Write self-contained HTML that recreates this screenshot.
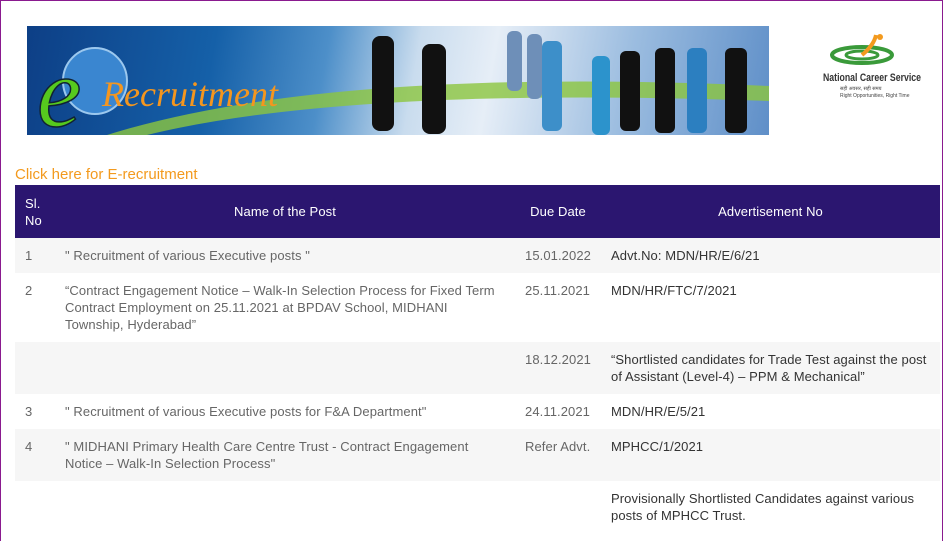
<!DOCTYPE html>
<html><head><meta charset="utf-8"><style>
html,body{margin:0;padding:0;}
body{width:943px;height:535px;overflow:hidden;background:#fff;font-family:"Liberation Sans",sans-serif;position:relative;}
.frame{position:absolute;left:0;top:0;width:941px;height:540px;border:1px solid #8a1a8f;border-bottom:none;}
.banner{position:absolute;left:27px;top:26px;width:742px;height:109px;overflow:hidden;
background:linear-gradient(100deg,#0d3f86 0%,#1560a8 25%,#4d8fc9 40%,#c9dcee 52%,#e6eef7 62%,#9cbde0 80%,#5f8fc8 100%);}
.link{position:absolute;left:15px;top:166px;color:#f39a1e;font-size:15px;}
table{position:absolute;left:15px;top:185px;width:925px;border-collapse:collapse;font-size:13px;letter-spacing:0.09px;}
th{background:#2b1670;color:#fff;font-weight:normal;height:53px;padding:0 10px;line-height:17px;}
td{padding:9px 10px;line-height:17px;color:#666;vertical-align:top;}
tr.g td{background:#f6f6f6;}
td.a{color:#333;}
</style></head><body>
<div class="frame"></div>
<div class="banner">
<svg width="742" height="109">
<path d="M80 109 Q300 40 742 60 L742 75 Q320 60 120 109Z" fill="#8cc63f" opacity=".8"/>
<ellipse cx="68" cy="55" rx="32" ry="33" fill="#3a86d0" stroke="#9cc8ee" stroke-width="2"/>
<text x="10" y="100" font-family="Liberation Serif" font-style="italic" font-size="100" fill="#56c91e" stroke="#123" stroke-width="1.5">e</text>
<text x="75" y="80" font-family="Liberation Serif" font-style="italic" font-size="36" fill="#f4961f">Recruitment</text>
<g fill="#111">
<rect x="345" y="10" width="22" height="95" rx="8"/><rect x="395" y="18" width="24" height="90" rx="8"/>
<rect x="480" y="5" width="15" height="60" rx="6" fill="#6e8fb8"/><rect x="500" y="8" width="15" height="65" rx="6" fill="#6e8fb8"/>
<rect x="515" y="15" width="20" height="90" rx="6" fill="#3d8fc9"/>
<rect x="565" y="30" width="18" height="79" rx="6" fill="#2c93cc"/>
<rect x="593" y="25" width="20" height="80" rx="6"/><rect x="628" y="22" width="20" height="85" rx="6"/>
<rect x="660" y="22" width="20" height="85" rx="6" fill="#2c7fc0"/><rect x="698" y="22" width="22" height="85" rx="6"/>
</g>
</svg>
</div>
<svg style="position:absolute;left:822px;top:33px" width="102" height="70">
<ellipse cx="40" cy="22" rx="30" ry="8" fill="none" stroke="#3a9a3a" stroke-width="4"/>
<ellipse cx="40" cy="22" rx="16" ry="4" fill="none" stroke="#3a9a3a" stroke-width="3"/>
<path d="M40 22 Q52 12 54 2" stroke="#f39a1e" stroke-width="4" fill="none"/><circle cx="58" cy="4" r="3" fill="#f39a1e"/>
<text x="1" y="48" font-size="11" font-weight="bold" fill="#333" textLength="98" lengthAdjust="spacingAndGlyphs">National Career Service</text>
<text x="18" y="57" font-size="5" fill="#444">सही अवसर, सही समय</text>
<text x="18" y="64" font-size="5" fill="#444">Right Opportunities, Right Time</text>
</svg>
<div class="link">Click here for E-recruitment</div>
<table>
<tr><th style="width:20px;text-align:left">Sl.<br>No</th><th style="width:440px">Name of the Post</th><th style="width:66px">Due Date</th><th>Advertisement No</th></tr>
<tr class="g"><td>1</td><td>" Recruitment of various Executive posts "</td><td>15.01.2022</td><td class="a">Advt.No: MDN/HR/E/6/21</td></tr>
<tr><td>2</td><td>“Contract Engagement Notice – Walk-In Selection Process for Fixed Term Contract Employment on 25.11.2021 at BPDAV School, MIDHANI Township, Hyderabad”</td><td>25.11.2021</td><td class="a">MDN/HR/FTC/7/2021</td></tr>
<tr class="g"><td></td><td></td><td>18.12.2021</td><td class="a">“Shortlisted candidates for Trade Test against the post of Assistant (Level-4) – PPM &amp; Mechanical”</td></tr>
<tr><td>3</td><td>" Recruitment of various Executive posts for F&amp;A Department"</td><td>24.11.2021</td><td class="a">MDN/HR/E/5/21</td></tr>
<tr class="g"><td>4</td><td>" MIDHANI Primary Health Care Centre Trust - Contract Engagement Notice – Walk-In Selection Process"</td><td>Refer Advt.</td><td class="a">MPHCC/1/2021</td></tr>
<tr><td></td><td></td><td></td><td class="a">Provisionally Shortlisted Candidates against various posts of MPHCC Trust.</td></tr>
</table>
</body></html>
